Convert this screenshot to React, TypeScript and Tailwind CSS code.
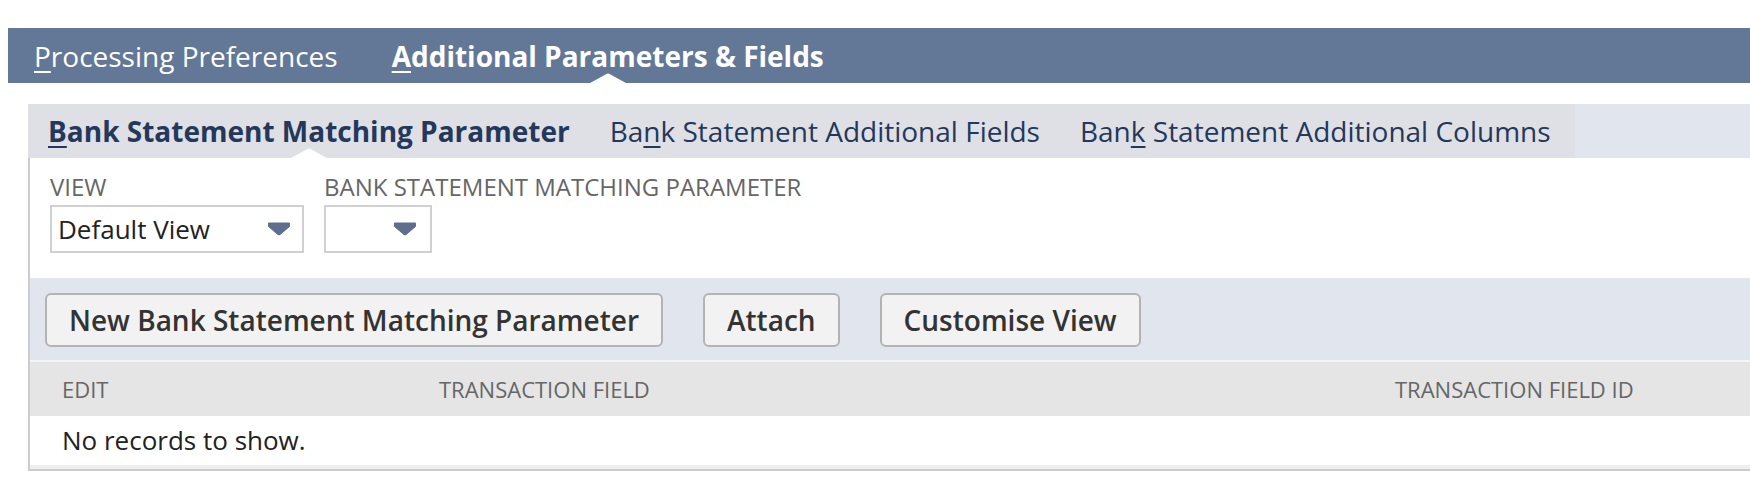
import React from 'react';

const Notch = () => (
  <svg
    className="absolute bottom-0 left-1/2 -translate-x-1/2"
    width="36"
    height="10"
    viewBox="0 0 36 10"
  >
    <path d="M0 10 L16 1.2 Q18 0 20 1.2 L36 10 Z" fill="#ffffff" />
  </svg>
);

const Arrow = () => (
  <svg width="24" height="14" viewBox="0 0 24 14">
    <path
      d="M1.5 1 H22.5 V4.5 L13.2 12.4 Q12 13.4 10.8 12.4 L1.5 4.5 Z"
      fill="#5d6e8e"
      stroke="#5d6e8e"
      strokeWidth="1"
      strokeLinejoin="round"
    />
  </svg>
);

const subtabs = [
  { pre: '', key: 'B', post: 'ank Statement Matching Parameter', active: true },
  { pre: 'Ba', key: 'n', post: 'k Statement Additional Fields', active: false },
  { pre: 'Ban', key: 'k', post: ' Statement Additional Columns', active: false },
];

const buttons = ['New Bank Statement Matching Parameter', 'Attach', 'Customise View'];

export default function App() {
  return (
    <div className="w-[1750px] h-[498px] bg-white pt-[28px] font-['Open_Sans',sans-serif] overflow-hidden">
      {/* main tabs */}
      <div className="ml-2 h-[55px] bg-[#637796] flex pl-[26px] gap-[54px] text-[28px] text-white">
        <div className="relative h-full flex items-center">
          <span>
            <span className="underline decoration-2 underline-offset-[4px]">P</span>rocessing Preferences
          </span>
        </div>
        <div className="relative h-full flex items-center font-bold">
          <span>
            <span className="underline decoration-2 underline-offset-[4px]">A</span>dditional Parameters &amp; Fields
          </span>
          <Notch />
        </div>
      </div>

      <div className="ml-[28px] mt-[21px]">
        {/* sub tabs */}
        <div className="h-[54px] flex bg-[#e0e5ee]">
          <div className="flex bg-[#dfe0e5] pr-1">
            {subtabs.map((t, i) => (
              <div
                key={i}
                className={`relative h-full flex items-center px-5 text-[28px] text-[#24385b] ${t.active ? 'font-bold' : ''}`}
              >
                <span>
                  {t.pre}
                  <span className="underline decoration-2 underline-offset-[4px]">{t.key}</span>
                  {t.post}
                </span>
                {t.active && <Notch />}
              </div>
            ))}
          </div>
        </div>

        {/* content */}
        <div className="border-l-2 border-b-2 border-[#cccccc]">
          <div className="flex gap-5 pl-5 pt-[14px] pb-[25px]">
            <div className="w-[254px]">
              <div className="text-[24px] leading-[30px] text-[#666666] mb-[3px]">VIEW</div>
              <div className="h-[48px] border-2 border-[#d0d0d0] flex items-center justify-between pl-[6px] pr-[11px]">
                <span className="text-[26px] text-[#222222]">Default View</span>
                <Arrow />
              </div>
            </div>
            <div>
              <div className="text-[24px] leading-[30px] text-[#666666] mb-[3px]">
                BANK STATEMENT MATCHING PARAMETER
              </div>
              <div className="w-[108px] h-[48px] border-2 border-[#d0d0d0] flex items-center justify-end pr-[13px]">
                <Arrow />
              </div>
            </div>
          </div>

          <div className="h-[82px] bg-[#e0e5ee] flex gap-[40px] pl-[15px] pt-[15px]">
            {buttons.map((b) => (
              <button
                key={b}
                className="h-[54px] px-[22px] border-2 border-[#b3b3b3] rounded-[6px] bg-[#f2f2f2] text-[28px] font-semibold text-[#333333]"
              >
                {b}
              </button>
            ))}
          </div>
          <div className="h-[2px] bg-[#f4f5f8]" />

          <div className="h-[54px] bg-[#e5e5e5] grid grid-cols-[377px_956px_1fr] items-center text-[22px] text-[#666666]">
            <div className="pl-8">EDIT</div>
            <div className="pl-8">TRANSACTION FIELD</div>
            <div className="pl-8">TRANSACTION FIELD ID</div>
          </div>
          <div className="h-[49px] flex items-center pl-8 text-[26px] text-[#222222]">No records to show.</div>
          <div className="h-[4px] bg-[#efefef]" />
        </div>
      </div>
    </div>
  );
}
